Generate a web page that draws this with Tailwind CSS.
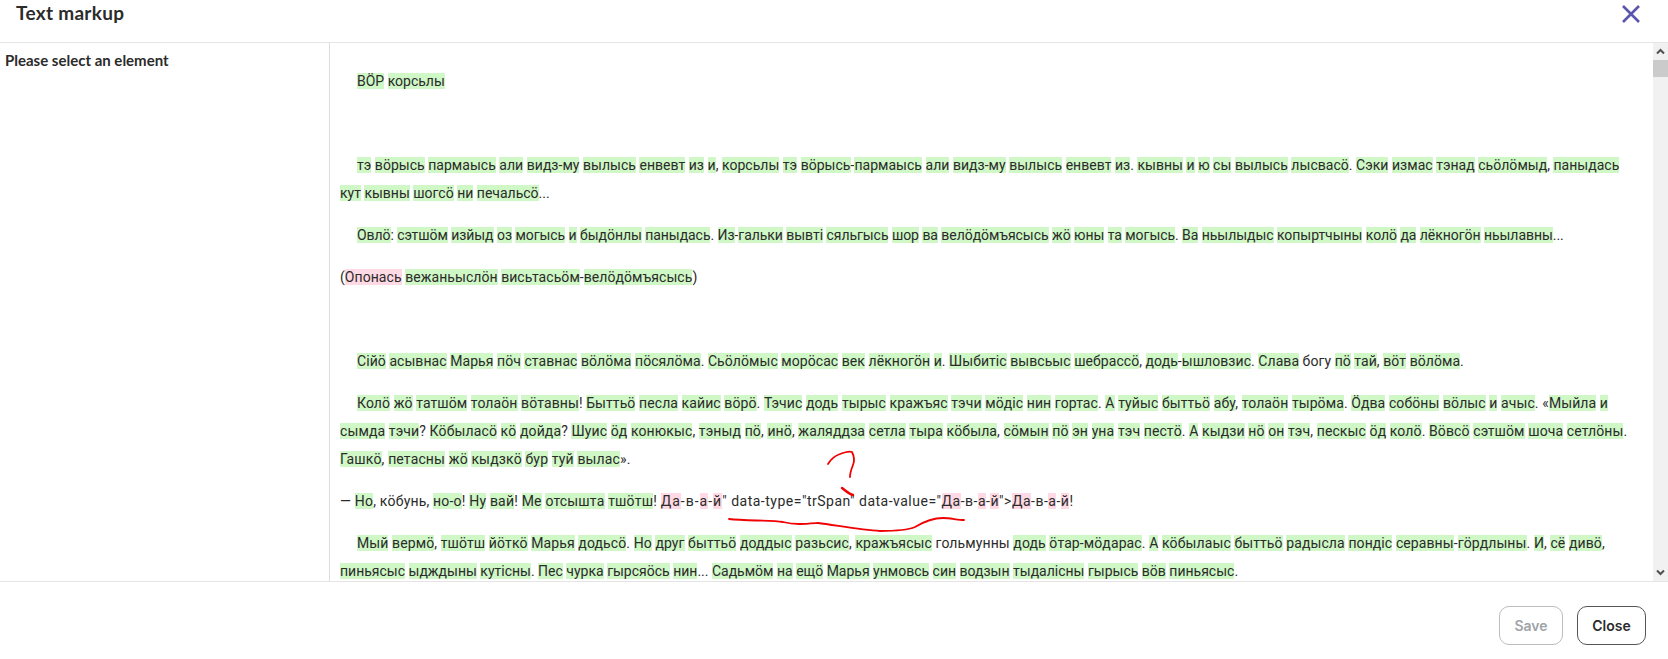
<!DOCTYPE html>
<html lang="en" class="h-full w-full">
<head>
<meta charset="UTF-8" />
<title>Text markup</title>
<script src="https://cdn.jsdelivr.net/npm/@tailwindcss/browser@4"></script>
</head>
<body class="relative h-[659px] w-full overflow-hidden bg-white flex flex-col text-[#2b2b2b] font-['Inter',sans-serif]">
    <!-- header -->
    <div class="h-[43px] shrink-0 flex justify-between border-b border-[#e5e5e5] pl-4 pr-[27px]">
        <div class="text-[19px] leading-[26px] tracking-[0.3px] font-bold font-['Lato',sans-serif]">Text markup</div>
        <svg class="mt-[4px] h-[20px] w-[20px]" viewBox="0 0 20 20" fill="none" stroke="#5a56ad" stroke-width="2.6"><path d="M2 2 L18 18 M18 2 L2 18" /></svg>
    </div>
    <!-- body -->
    <div class="h-[539px] shrink-0 flex border-b border-[#e5e5e5]">
        <div class="w-[330px] shrink-0 border-r border-[#dcdcdc] pl-[5px] pt-[7px] text-[15px] leading-5 font-bold font-['Lato',sans-serif]">Please select an element</div>
        <div class="flex-1 min-w-0 overflow-hidden pl-[10px] pt-[24px] text-[14px] leading-[28px] whitespace-nowrap font-['Roboto',sans-serif] [&_mark]:bg-[#cff8c6] [&_mark]:text-[#2b2b2b] [&_em]:not-italic [&_em]:bg-[#ffd9e4] [&_p]:mb-[14px] [&_.i]:indent-[17px]">
            <p class="i"><mark>ВÖР</mark> <mark>корсьлы</mark></p>
            <p>&nbsp;</p>
            <p class="i"><span class="tracking-[0.03px]"><mark>тэ</mark> <mark>вöрысь</mark> <mark>пармаысь</mark> <mark>али</mark> <mark>видз-му</mark> <mark>вылысь</mark> <mark>енвевт</mark> <mark>из</mark> <mark>и</mark>, <mark>корсьлы</mark> <mark>тэ</mark> <mark>вöрысь</mark>-<mark>пармаысь</mark> <mark>али</mark> <mark>видз-му</mark> <mark>вылысь</mark> <mark>енвевт</mark> <mark>из</mark>. <mark>кывны</mark> <mark>и</mark> <mark>ю</mark> <mark>сы</mark> <mark>вылысь</mark> <mark>лысвасö</mark>. <mark>Сэки</mark> <mark>измас</mark> <mark>тэнад</mark> <mark>сьöлöмыд</mark>, <mark>паныдась</mark></span><br /><mark>кут</mark> <mark>кывны</mark> <mark>шогсö</mark> <mark>ни</mark> <mark>печальсö</mark>...</p>
            <p class="i tracking-[-0.05px]"><mark>Овлö</mark>: <mark>сэтшöм</mark> <mark>изйыд</mark> <mark>оз</mark> <mark>могысь</mark> <mark>и</mark> <mark>быдöнлы</mark> <mark>паныдась</mark>. <mark>Из</mark>-<mark>гальки</mark> <mark>вывті</mark> <mark>сяльгысь</mark> <mark>шор</mark> <mark>ва</mark> <mark>велöдöмъясысь</mark> <mark>жö</mark> <mark>юны</mark> <mark>та</mark> <mark>могысь</mark>. <mark>Ва</mark> <mark>ньылыдыс</mark> <mark>копыртчыны</mark> <mark>колö</mark> <mark>да</mark> <mark>лёкногöн</mark> <mark>ньылавны</mark>...</p>
            <p class="tracking-[0.06px]">(<em>Опонась</em> <mark>вежаньыслöн</mark> <mark>висьтасьöм</mark>-<mark>велöдöмъясысь</mark>)</p>
            <p>&nbsp;</p>
            <p class="i tracking-[0.06px]"><mark>Сійö</mark> <mark>асывнас</mark> <mark>Марья</mark> <mark>пöч</mark> <mark>ставнас</mark> <mark>вöлöма</mark> <mark>пöсялöма</mark>. <mark>Сьöлöмыс</mark> <mark>морöсас</mark> <mark>век</mark> <mark>лёкногöн</mark> <mark>и</mark>. <mark>Шыбитіс</mark> <mark>вывсьыс</mark> <mark>шебрассö</mark>, <mark>додь</mark>-<mark>ышловзис</mark>. <mark>Слава</mark> богу <mark>пö</mark> <mark>тай</mark>, <mark>вöт</mark> <mark>вöлöма</mark>.</p>
            <p class="i"><span class="tracking-[0.09px]"><mark>Колö</mark> <mark>жö</mark> <mark>татшöм</mark> <mark>толаöн</mark> <mark>вöтавны</mark>! <mark>Быттьö</mark> <mark>песла</mark> <mark>кайис</mark> <mark>вöрö</mark>. <mark>Тэчис</mark> <mark>додь</mark> <mark>тырыс</mark> <mark>кражъяс</mark> <mark>тэчи</mark> <mark>мöдіс</mark> <mark>нин</mark> <mark>гортас</mark>. <mark>А</mark> <mark>туйыс</mark> <mark>быттьö</mark> <mark>абу</mark>, <mark>толаöн</mark> <mark>тырöма</mark>. <mark>Öдва</mark> <mark>собöны</mark> <mark>вöлыс</mark> <mark>и</mark> <mark>ачыс</mark>. «<mark>Мыйла</mark> <mark>и</mark></span><br /><span class="tracking-[0.11px]"><mark>сымда</mark> <mark>тэчи</mark>? <mark>Кöбыласö</mark> <mark>кö</mark> <mark>дойда</mark>? <mark>Шуис</mark> <mark>öд</mark> <mark>конюкыс</mark>, <mark>тэныд</mark> <mark>пö</mark>, <mark>инö</mark>, <mark>жаляддза</mark> <mark>сетла</mark> <mark>тыра</mark> <mark>кöбыла</mark>, <mark>сöмын</mark> <mark>пö</mark> <mark>эн</mark> <mark>уна</mark> <mark>тэч</mark> <mark>пестö</mark>. <mark>А</mark> <mark>кыдзи</mark> <mark>нö</mark> <mark>он</mark> <mark>тэч</mark>, <mark>пескыс</mark> <mark>öд</mark> <mark>колö</mark>. <mark>Вöвсö</mark> <mark>сэтшöм</mark> <mark>шоча</mark> <mark>сетлöны</mark>.</span><br /><span class="tracking-[0.15px]"><mark>Гашкö</mark>, <mark>петасны</mark> <mark>жö</mark> <mark>кыдзкö</mark> <mark>бур</mark> <mark>туй</mark> <mark>вылас</mark>».</span></p>
            <p><span class="tracking-[0.19px]">— <mark>Но</mark>, кöбунь, <mark>но-о</mark>! <mark>Ну</mark> <mark>вай</mark>! <mark>Ме</mark> <mark>отсышта</mark> <mark>тшöтш</mark>! </span><span class="tracking-[1px]"><em>Да</em>-в-<em>а</em>-<em>й</em></span><span class="tracking-[0.5px]">" data-type="trSpan" data-value="</span><span class="tracking-[0.5px]"><em>Да</em>-в-<em>а</em>-<em>й</em>"&gt;<em>Да</em>-в-<em>а</em>-<em>й</em>!</span></p>
            <p class="i"><span class="tracking-[0.1px]"><mark>Мый</mark> <mark>вермö</mark>, <mark>тшöтш</mark> <mark>йöткö</mark> <mark>Марья</mark> <mark>додьсö</mark>. <mark>Но</mark> <mark>друг</mark> <mark>быттьö</mark> <mark>доддыс</mark> <mark>разьсис</mark>, <mark>кражъясыс</mark> гольмунны <mark>додь</mark> <mark>öтар-мöдарас</mark>. <mark>А</mark> <mark>кöбылаыс</mark> <mark>быттьö</mark> <mark>радысла</mark> <mark>пондіс</mark> <mark>серавны</mark>-<mark>гöрдлыны</mark>. <mark>И</mark>, <mark>сё</mark> <mark>дивö</mark>,</span><br /><mark>пиньясыс</mark> <mark>ыдждыны</mark> <mark>кутісны</mark>. <mark>Пес</mark> <mark>чурка</mark> <mark>гырсяöсь</mark> <mark>нин</mark>... <mark>Садьмöм</mark> <mark>на</mark> <mark>ещö</mark> <mark>Марья</mark> <mark>унмовсь</mark> <mark>син</mark> <mark>водзын</mark> <mark>тыдалісны</mark> <mark>гырысь</mark> <mark>вöв</mark> <mark>пиньясыс</mark>.</p>
        </div>
        <!-- scrollbar -->
        <div class="w-[15px] shrink-0 bg-[#f1f1f1] flex flex-col justify-between">
            <div>
                <svg class="h-[17px] w-[15px]" viewBox="0 0 15 17" fill="none" stroke="#505050" stroke-width="2"><path d="M4 10.5 L7.5 7 L11 10.5" /></svg>
                <div class="h-[17px] bg-[#cbcbcb]"></div>
            </div>
            <svg class="h-[17px] w-[15px]" viewBox="0 0 15 17" fill="none" stroke="#505050" stroke-width="2"><path d="M4 6.5 L7.5 10 L11 6.5" /></svg>
        </div>
    </div>
    <!-- footer -->
    <div class="flex-1 flex justify-end items-start gap-[14px] pt-[24px] pr-[22px] text-[14px] font-semibold">
        <button class="h-[39px] w-[64px] rounded-[10px] border border-[#bdbdbd] text-[#a0a3a8]">Save</button>
        <button class="h-[39px] w-[69px] rounded-[10px] border border-[#555555] text-[#2b2b2b]">Close</button>
    </div>
    <!-- red pen marks on top of the text -->
    <svg class="absolute left-0 top-0 pointer-events-none" width="1668" height="659" fill="none" stroke="#f00000" stroke-width="1.8" stroke-linecap="round" stroke-linejoin="round">
        <path d="M828 464 C831 459 834 456 840 454 C845 452 850 451 852 452 C854 456 855 460 853 465 C851 470 850 473 850 477" />
        <path d="M842 488 C846 491 849 494 853 495" stroke-width="2.4" />
        <path d="M729 519 C745 521 770 520 783 522 C795 525 805 524 818 523 C835 525 860 530 880 531 C895 531 908 530 915 527 C925 521 935 518 943 518 C950 518 958 520 964 520" />
    </svg>
</body>
</html>
